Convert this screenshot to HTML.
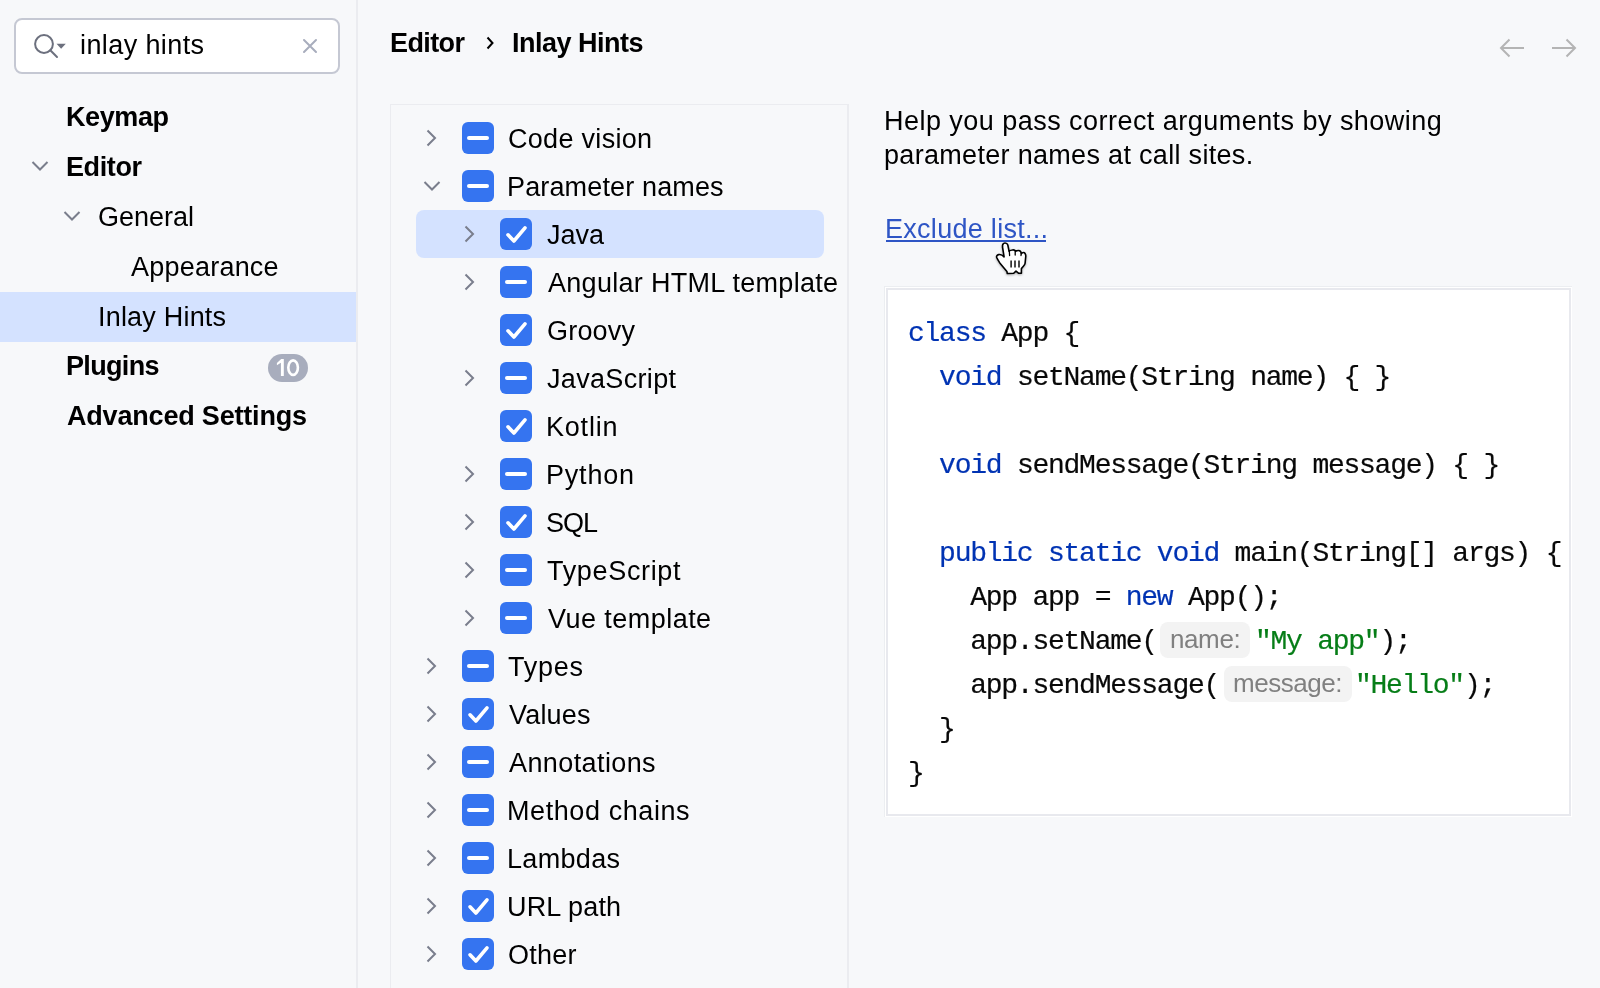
<!DOCTYPE html>
<html><head><meta charset="utf-8">
<style>
*{margin:0;padding:0;box-sizing:border-box}
html,body{width:1600px;height:988px;overflow:hidden;background:#f7f8fa;font-family:"Liberation Sans",sans-serif;color:#000}
.a{position:absolute}
.t{position:absolute;will-change:transform;font-size:27px;line-height:30px;white-space:nowrap}
.b{font-weight:bold}
#divider{left:356px;top:0;width:2px;height:988px;background:#ebecf0}
#search{left:14px;top:18px;width:326px;height:56px;border:2px solid #c5c8d3;border-radius:8px;background:#fff}
.sel{left:0;top:292px;width:356px;height:50px;background:#d4e2ff}
.badge{left:268px;top:354px;width:40px;height:28px;border-radius:14px;background:#a8adbd;color:#fff;font-size:21px;font-weight:bold;line-height:28px;text-align:center}
#tree{left:390px;top:104px;width:459px;height:900px;border:1px solid #ebecf0;border-right:2px solid #ebecf0}
.jsel{left:416px;top:210px;width:408px;height:48px;border-radius:8px;background:#d4e2ff}
.cb{position:absolute;width:32px;height:32px;border-radius:6px;background:#3574f0}
.cb.m::after{content:"";position:absolute;left:5px;top:14px;width:22px;height:4px;border-radius:2px;background:#fff}
.code{position:absolute;will-change:transform;font-family:"Liberation Mono",monospace;font-size:28px;letter-spacing:-1.25px;line-height:44px;white-space:pre;color:#080808;-webkit-text-stroke:0.2px currentColor}
.k{color:#0033b3}
.s{color:#067d17}
.hint{position:absolute;background:#f3f3f3;border-radius:8px}
.htxt{position:absolute;will-change:transform;font-family:"Liberation Sans",sans-serif;font-size:26px;line-height:30px;color:#808080;white-space:nowrap}
.ul{position:absolute;height:2px;background:#2e55c5}
</style></head><body>
<!-- sidebar -->
<div id="divider" class="a"></div>
<div id="search" class="a"></div>
<svg class="a" style="left:30px;top:30px" width="40" height="32" viewBox="0 0 40 32">
 <circle cx="14" cy="14" r="8.9" fill="none" stroke="#6c707e" stroke-width="2"/>
 <line x1="20.3" y1="20.3" x2="27" y2="27" stroke="#6c707e" stroke-width="2" stroke-linecap="round"/>
 <path d="M26.5 13.8 L35.8 13.8 L31.15 18.8 Z" fill="#6c707e"/>
</svg>
<div class="t" id="searchtxt" style="left:79.90px;top:29.54px;letter-spacing:0.400px">inlay hints</div>
<svg class="a" style="left:300px;top:36px" width="20" height="20" viewBox="0 0 20 20">
 <path d="M4 4 L16 16 M16 4 L4 16" stroke="#a8adbd" stroke-width="2" stroke-linecap="round"/>
</svg>

<div class="a sel"></div>
<div class="t b" id="keymap" style="left:65.89px;top:101.74px;letter-spacing:-0.400px">Keymap</div>
<svg class="a" style="left:30px;top:156px" width="20" height="20" viewBox="0 0 20 20"><path d="M2.5 6 L10 13.5 L17.5 6" fill="none" stroke="#7a7e8c" stroke-width="2"/></svg>
<div class="t b" id="editor" style="left:65.89px;top:151.94px;letter-spacing:-0.400px">Editor</div>
<svg class="a" style="left:62px;top:206px" width="20" height="20" viewBox="0 0 20 20"><path d="M2.5 6 L10 13.5 L17.5 6" fill="none" stroke="#7a7e8c" stroke-width="2"/></svg>
<div class="t" id="general" style="left:97.50px;top:201.54px;letter-spacing:0.000px">General</div>
<div class="t" id="appearance" style="left:130.50px;top:251.64px;letter-spacing:0.222px">Appearance</div>
<div class="t" id="inlay" style="left:98.09px;top:301.64px;letter-spacing:0.200px">Inlay Hints</div>
<div class="t b" id="plugins" style="left:65.69px;top:351.24px;letter-spacing:-0.667px">Plugins</div>
<div class="a badge"><svg width="40" height="28" viewBox="0 0 40 28" style="position:absolute;left:0;top:0"><path d="M12.9 5 H15.8 V22 H12.9 V8.7 L8.9 11.3 V8.9 L13.2 5 Z" fill="#fff"/><ellipse cx="25.1" cy="13.6" rx="4.8" ry="7.25" fill="none" stroke="#fff" stroke-width="2.6"/></svg></div>
<div class="t b" id="adv" style="left:66.69px;top:400.84px;letter-spacing:-0.188px">Advanced Settings</div>

<!-- header -->
<div class="t b" id="bc1" style="left:389.89px;top:27.74px;letter-spacing:-0.600px">Editor</div>
<svg class="a" style="left:482px;top:33px" width="16" height="20" viewBox="0 0 16 20"><path d="M5.5 4.5 L10.5 10 L5.5 15.5" fill="none" stroke="#000" stroke-width="2"/></svg>
<div class="t b" id="bc2" style="left:511.89px;top:27.74px;letter-spacing:-0.500px">Inlay Hints</div>
<svg class="a" style="left:1496px;top:34px" width="32" height="28" viewBox="0 0 32 28"><path d="M28 14 L5 14 M13.5 5.5 L5 14 L13.5 22.5" fill="none" stroke="#b4b4b4" stroke-width="2"/></svg>
<svg class="a" style="left:1548px;top:34px" width="32" height="28" viewBox="0 0 32 28"><path d="M4 14 L27 14 M18.5 5.5 L27 14 L18.5 22.5" fill="none" stroke="#b4b4b4" stroke-width="2"/></svg>

<!-- tree -->
<div id="tree" class="a"></div>
<div class="a jsel"></div>
<svg class="a" style="left:422px;top:128px" width="20" height="20" viewBox="0 0 20 20"><path d="M5.5 2.5 L13 10 L5.5 17.5" fill="none" stroke="#7a7e8c" stroke-width="2"/></svg>
<div class="cb m" style="left:462px;top:122px"></div>
<div class="t" id="row0" style="left:507.80px;top:124.04px;letter-spacing:0.300px">Code vision</div>
<svg class="a" style="left:422px;top:176px" width="20" height="20" viewBox="0 0 20 20"><path d="M2.5 6 L10 13.5 L17.5 6" fill="none" stroke="#7a7e8c" stroke-width="2"/></svg>
<div class="cb m" style="left:462px;top:170px"></div>
<div class="t" id="row1" style="left:506.80px;top:172.04px;letter-spacing:0.143px">Parameter names</div>
<svg class="a" style="left:460px;top:224px" width="20" height="20" viewBox="0 0 20 20"><path d="M5.5 2.5 L13 10 L5.5 17.5" fill="none" stroke="#7a7e8c" stroke-width="2"/></svg>
<div class="cb" style="left:500px;top:218px"><svg width="32" height="32" viewBox="0 0 32 32" style="position:absolute;left:0;top:0"><path d="M8 16.8 L13.9 23 L25 9.9" fill="none" stroke="#fff" stroke-width="3.6" stroke-linecap="round" stroke-linejoin="round"/></svg></div>
<div class="t" id="row2" style="left:546.69px;top:220.04px;letter-spacing:0.000px">Java</div>
<svg class="a" style="left:460px;top:272px" width="20" height="20" viewBox="0 0 20 20"><path d="M5.5 2.5 L13 10 L5.5 17.5" fill="none" stroke="#7a7e8c" stroke-width="2"/></svg>
<div class="cb m" style="left:500px;top:266px"></div>
<div class="t" id="row3" style="left:547.69px;top:268.04px;letter-spacing:0.300px">Angular HTML template</div>
<div class="cb" style="left:500px;top:314px"><svg width="32" height="32" viewBox="0 0 32 32" style="position:absolute;left:0;top:0"><path d="M8 16.8 L13.9 23 L25 9.9" fill="none" stroke="#fff" stroke-width="3.6" stroke-linecap="round" stroke-linejoin="round"/></svg></div>
<div class="t" id="row4" style="left:546.69px;top:316.04px;letter-spacing:0.200px">Groovy</div>
<svg class="a" style="left:460px;top:368px" width="20" height="20" viewBox="0 0 20 20"><path d="M5.5 2.5 L13 10 L5.5 17.5" fill="none" stroke="#7a7e8c" stroke-width="2"/></svg>
<div class="cb m" style="left:500px;top:362px"></div>
<div class="t" id="row5" style="left:546.69px;top:364.04px;letter-spacing:0.333px">JavaScript</div>
<div class="cb" style="left:500px;top:410px"><svg width="32" height="32" viewBox="0 0 32 32" style="position:absolute;left:0;top:0"><path d="M8 16.8 L13.9 23 L25 9.9" fill="none" stroke="#fff" stroke-width="3.6" stroke-linecap="round" stroke-linejoin="round"/></svg></div>
<div class="t" id="row6" style="left:545.69px;top:412.04px;letter-spacing:0.800px">Kotlin</div>
<svg class="a" style="left:460px;top:464px" width="20" height="20" viewBox="0 0 20 20"><path d="M5.5 2.5 L13 10 L5.5 17.5" fill="none" stroke="#7a7e8c" stroke-width="2"/></svg>
<div class="cb m" style="left:500px;top:458px"></div>
<div class="t" id="row7" style="left:545.69px;top:460.04px;letter-spacing:0.800px">Python</div>
<svg class="a" style="left:460px;top:512px" width="20" height="20" viewBox="0 0 20 20"><path d="M5.5 2.5 L13 10 L5.5 17.5" fill="none" stroke="#7a7e8c" stroke-width="2"/></svg>
<div class="cb" style="left:500px;top:506px"><svg width="32" height="32" viewBox="0 0 32 32" style="position:absolute;left:0;top:0"><path d="M8 16.8 L13.9 23 L25 9.9" fill="none" stroke="#fff" stroke-width="3.6" stroke-linecap="round" stroke-linejoin="round"/></svg></div>
<div class="t" id="row8" style="left:545.69px;top:508.04px;letter-spacing:-1.000px">SQL</div>
<svg class="a" style="left:460px;top:560px" width="20" height="20" viewBox="0 0 20 20"><path d="M5.5 2.5 L13 10 L5.5 17.5" fill="none" stroke="#7a7e8c" stroke-width="2"/></svg>
<div class="cb m" style="left:500px;top:554px"></div>
<div class="t" id="row9" style="left:546.69px;top:556.04px;letter-spacing:0.667px">TypeScript</div>
<svg class="a" style="left:460px;top:608px" width="20" height="20" viewBox="0 0 20 20"><path d="M5.5 2.5 L13 10 L5.5 17.5" fill="none" stroke="#7a7e8c" stroke-width="2"/></svg>
<div class="cb m" style="left:500px;top:602px"></div>
<div class="t" id="row10" style="left:547.69px;top:604.04px;letter-spacing:0.455px">Vue template</div>
<svg class="a" style="left:422px;top:656px" width="20" height="20" viewBox="0 0 20 20"><path d="M5.5 2.5 L13 10 L5.5 17.5" fill="none" stroke="#7a7e8c" stroke-width="2"/></svg>
<div class="cb m" style="left:462px;top:650px"></div>
<div class="t" id="row11" style="left:507.80px;top:652.04px;letter-spacing:0.750px">Types</div>
<svg class="a" style="left:422px;top:704px" width="20" height="20" viewBox="0 0 20 20"><path d="M5.5 2.5 L13 10 L5.5 17.5" fill="none" stroke="#7a7e8c" stroke-width="2"/></svg>
<div class="cb" style="left:462px;top:698px"><svg width="32" height="32" viewBox="0 0 32 32" style="position:absolute;left:0;top:0"><path d="M8 16.8 L13.9 23 L25 9.9" fill="none" stroke="#fff" stroke-width="3.6" stroke-linecap="round" stroke-linejoin="round"/></svg></div>
<div class="t" id="row12" style="left:508.80px;top:700.04px;letter-spacing:0.200px">Values</div>
<svg class="a" style="left:422px;top:752px" width="20" height="20" viewBox="0 0 20 20"><path d="M5.5 2.5 L13 10 L5.5 17.5" fill="none" stroke="#7a7e8c" stroke-width="2"/></svg>
<div class="cb m" style="left:462px;top:746px"></div>
<div class="t" id="row13" style="left:508.80px;top:748.04px;letter-spacing:0.400px">Annotations</div>
<svg class="a" style="left:422px;top:800px" width="20" height="20" viewBox="0 0 20 20"><path d="M5.5 2.5 L13 10 L5.5 17.5" fill="none" stroke="#7a7e8c" stroke-width="2"/></svg>
<div class="cb m" style="left:462px;top:794px"></div>
<div class="t" id="row14" style="left:506.80px;top:796.04px;letter-spacing:0.583px">Method chains</div>
<svg class="a" style="left:422px;top:848px" width="20" height="20" viewBox="0 0 20 20"><path d="M5.5 2.5 L13 10 L5.5 17.5" fill="none" stroke="#7a7e8c" stroke-width="2"/></svg>
<div class="cb m" style="left:462px;top:842px"></div>
<div class="t" id="row15" style="left:506.80px;top:844.04px;letter-spacing:0.333px">Lambdas</div>
<svg class="a" style="left:422px;top:896px" width="20" height="20" viewBox="0 0 20 20"><path d="M5.5 2.5 L13 10 L5.5 17.5" fill="none" stroke="#7a7e8c" stroke-width="2"/></svg>
<div class="cb" style="left:462px;top:890px"><svg width="32" height="32" viewBox="0 0 32 32" style="position:absolute;left:0;top:0"><path d="M8 16.8 L13.9 23 L25 9.9" fill="none" stroke="#fff" stroke-width="3.6" stroke-linecap="round" stroke-linejoin="round"/></svg></div>
<div class="t" id="row16" style="left:506.80px;top:892.04px;letter-spacing:0.143px">URL path</div>
<svg class="a" style="left:422px;top:944px" width="20" height="20" viewBox="0 0 20 20"><path d="M5.5 2.5 L13 10 L5.5 17.5" fill="none" stroke="#7a7e8c" stroke-width="2"/></svg>
<div class="cb" style="left:462px;top:938px"><svg width="32" height="32" viewBox="0 0 32 32" style="position:absolute;left:0;top:0"><path d="M8 16.8 L13.9 23 L25 9.9" fill="none" stroke="#fff" stroke-width="3.6" stroke-linecap="round" stroke-linejoin="round"/></svg></div>
<div class="t" id="row17" style="left:507.80px;top:940.04px;letter-spacing:0.250px">Other</div>

<!-- description -->
<div class="t" id="desc1" style="left:884.09px;top:105.64px;letter-spacing:0.463px">Help you pass correct arguments by showing</div>
<div class="t" id="desc2" style="left:884.09px;top:139.94px;letter-spacing:0.310px">parameter names at call sites.</div>
<div class="t" id="excl" style="left:884.50px;top:214.04px;letter-spacing:0.286px;color:#2e55c5">Exclude list...</div>
<div class="ul" style="left:886px;top:240px;width:160px"></div>

<!-- code box -->
<div class="a" style="left:884px;top:286px;width:688px;height:531px;background:#fff;border-top:1px solid #eceef1;border-left:1px solid #eceef1"></div>
<div class="a" style="left:886px;top:288px;width:685px;height:528px;background:#fff;border:2px solid #e8e9ee"></div>
<div class="code" style="left:908px;top:312.25px"><span class="k">class</span> App {</div>
<div class="code" style="left:908px;top:356.25px">  <span class="k">void</span> setName(String name) { }</div>
<div class="code" style="left:908px;top:444.25px">  <span class="k">void</span> sendMessage(String message) { }</div>
<div class="code" style="left:908px;top:532.25px">  <span class="k">public static void</span> main(String[] args) {</div>
<div class="code" style="left:908px;top:576.25px">    App app = <span class="k">new</span> App();</div>
<div class="code" style="left:908px;top:620.25px">    app.setName(</div>
<div class="code" style="left:908px;top:664.25px">    app.sendMessage(</div>
<div class="code" style="left:908px;top:708.25px">  }</div>
<div class="code" style="left:908px;top:752.25px">}</div>
<div class="hint" style="left:1160px;top:622px;width:90px;height:36px"></div><div class="htxt" style="left:1169.60px;top:623.99px;letter-spacing:-0.400px">name:</div><div class="code" style="left:1255.00px;top:620.25px"><span class="s">"My app"</span>);</div>
<div class="hint" style="left:1224px;top:666px;width:128px;height:36px"></div><div class="htxt" style="left:1233.40px;top:667.99px;letter-spacing:-0.460px">message:</div><div class="code" style="left:1355.00px;top:664.25px"><span class="s">"Hello"</span>);</div>

<!-- cursor -->
<svg class="a" style="left:985px;top:235px;filter:drop-shadow(0.5px 1px 1px rgba(0,0,0,0.3))" width="50" height="45" viewBox="0 0 50 45">
 <path d="M20 8 C18 8 17.3 10 17.5 12 L19.1 21.9 C17.5 20 15.5 19.3 13.7 19.6 C12 20 11.3 21.5 11.6 22.3 C12.5 24.5 14 26.5 15 28.2 L21.9 36.4 L22.3 38.5 L28.7 38.3 L31 36 L33.7 38.3 L36.4 38.3 L36.4 33.7 C38 31.5 40 30 40.1 28.2 L40.8 21 C40.8 19 39.5 17.5 38.7 17.5 C37.5 17.5 36.6 18 36.4 18.7 C36 16 35 15.5 33.7 15.5 C32 15.5 30.8 16 30.5 16.4 C30 15 28.5 14.8 27.3 15 C25.5 15.2 24.3 16 24.1 16.4 L22.8 10 C22.5 9 21.5 8 20 8 Z" fill="#fff" stroke="#000" stroke-width="1.6" stroke-linejoin="round"/>
 <path d="M26.1 25.5 V32.5 M30 25.5 V32.5 M34 25.5 V32.5" stroke="#000" stroke-width="1.4"/>
 <path d="M24.3 16 L24.6 20.5 M30.2 16.8 V20 M36.2 18.2 L36 20.5" stroke="#000" stroke-width="1.3" stroke-linecap="round"/>
</svg>
</body></html>
